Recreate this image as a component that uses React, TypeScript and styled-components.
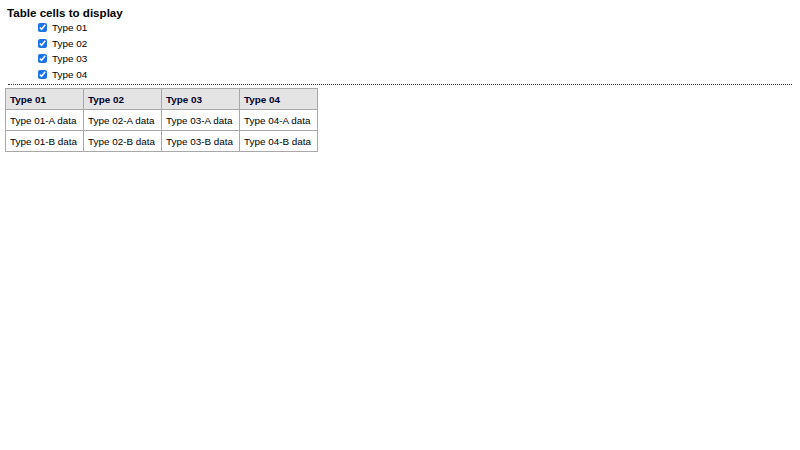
import React, { useState } from "react";
import styled, { createGlobalStyle } from "styled-components";

const Global = createGlobalStyle`
  html, body { margin: 0; padding: 0; background: #fff; }
  body { font-family: "Liberation Sans", Arial, sans-serif; color: #000; }
`;

const Page = styled.div`
  padding: 5px 8px 0 5px;
`;

const Heading = styled.div`
  font-size: 11.6px;
  font-weight: bold;
  line-height: 15px;
  padding-left: 2px;
`;

const OptionList = styled.ul`
  list-style: none;
  margin: 0;
  padding: 0 0 0 33px;
`;

const Option = styled.li`
  display: flex;
  align-items: center;
  height: 15.5px;
  font-size: 9.9px;
`;

const Check = styled.input`
  width: 9px;
  height: 9px;
  margin: 0 5px 0 0;
  accent-color: #1a73e8;
`;

const Divider = styled.div`
  margin: 2px 0 0 3px;
  border-top: 1px dotted #333;
`;

const Table = styled.table`
  margin-top: 3px;
  border-collapse: collapse;
  table-layout: fixed;
  width: 313px;
  border: 1px solid #8f8f8f;
  font-size: 9.9px;
`;

const HeadCell = styled.th`
  height: 20px;
  padding: 0 4px;
  text-align: left;
  font-weight: bold;
  color: #00002e;
  background: #e4e4e4;
  border: 1px solid #a8a8a8;
  white-space: nowrap;
  overflow: hidden;
`;

const Cell = styled.td`
  height: 20px;
  padding: 0 4px;
  border: 1px solid #a8a8a8;
  white-space: nowrap;
  overflow: hidden;
`;

const types = ["Type 01", "Type 02", "Type 03", "Type 04"];

export default function App() {
  const [checked, setChecked] = useState<boolean[]>([true, true, true, true]);
  const visible = types.filter((_, i) => checked[i]);
  return (
    <Page>
      <Global />
      <Heading>Table cells to display</Heading>
      <OptionList>
        {types.map((t, i) => (
          <Option key={t}>
            <Check
              type="checkbox"
              checked={checked[i]}
              onChange={() =>
                setChecked((c) => c.map((v, j) => (j === i ? !v : v)))
              }
            />
            {t}
          </Option>
        ))}
      </OptionList>
      <Divider />
      <Table>
        <thead>
          <tr>
            {visible.map((t) => (
              <HeadCell key={t}>{t}</HeadCell>
            ))}
          </tr>
        </thead>
        <tbody>
          {["A", "B"].map((r) => (
            <tr key={r}>
              {visible.map((t) => (
                <Cell key={t}>{`${t}-${r} data`}</Cell>
              ))}
            </tr>
          ))}
        </tbody>
      </Table>
    </Page>
  );
}
